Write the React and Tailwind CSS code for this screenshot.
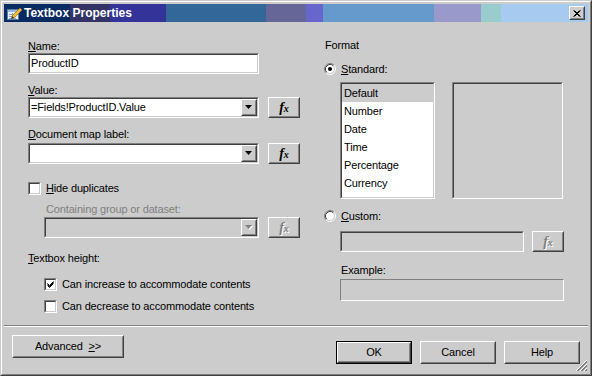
import React from 'react';

const font = "font-['Liberation_Sans',Arial,sans-serif]";

// 2px sunken edge, classic style
const Sunken = ({ className = '', inner = 'bg-white', children }) => (
  <div className={`border border-t-[#808080] border-l-[#808080] border-b-white border-r-white ${className}`}>
    <div className={`h-full border border-t-[#404040] border-l-[#404040] border-b-[#cccccc] border-r-[#cccccc] ${inner}`}>
      {children}
    </div>
  </div>
);

// thin 1px sunken edge
const Thin = ({ className = '' }) => (
  <div className={`border border-t-[#808080] border-l-[#808080] border-b-white border-r-white bg-[#cccccc] ${className}`} />
);

const Raised = ({ className = '', children, def = false }) => {
  const btn = (
    <div className={`h-full border border-t-white border-l-white border-b-[#404040] border-r-[#404040] bg-[#cccccc]`}>
      <div className="h-full border border-t-[#cccccc] border-l-[#cccccc] border-b-[#808080] border-r-[#808080] flex items-center justify-center">
        {children}
      </div>
    </div>
  );
  if (def) return <div className={`border border-black ${className}`}>{btn}</div>;
  return <div className={className}>{btn}</div>;
};

const Arrow = ({ disabled }) => (
  <svg width="8" height="5" viewBox="0 0 8 5">
    {disabled && <path d="M1 1h7l-3.5 4z" fill="#fff" />}
    <path d="M0 0h7l-3.5 4z" fill={disabled ? '#808080' : '#000'} />
  </svg>
);

const Fx = ({ disabled }) => (
  <span
    className={`font-['Liberation_Serif',serif] italic font-bold leading-none ${disabled ? 'text-[#808080] [text-shadow:1px_1px_0_#fff]' : 'text-black'}`}
  >
    <span className="text-[14px]">f</span>
    <span className="text-[10px]">x</span>
  </span>
);

const FxButton = ({ disabled }) => (
  <Raised className="w-[32px] h-[21px]">
    <Fx disabled={disabled} />
  </Raised>
);

const Combo = ({ value = '', className = '', disabled }) => (
  <Sunken className={`h-[21px] ${className}`} inner={disabled ? 'bg-[#cccccc]' : 'bg-white'}>
    <div className="flex h-full">
      <div className="flex-1 pl-[1px] leading-[17px] whitespace-nowrap overflow-hidden">{value}</div>
      <Raised className="w-[16px] h-full">
        <Arrow disabled={disabled} />
      </Raised>
    </div>
  </Sunken>
);

const Check = ({ checked }) => (
  <Sunken className="w-[13px] h-[13px] shrink-0">
    {checked && (
      <svg width="9" height="9" viewBox="0 0 9 9" className="block">
        <path d="M1.5 3.5l2 2 4-4M1.5 4.5l2 2 4-4M1.5 5.5l2 2 4-4" stroke="#000" fill="none" strokeWidth="1" />
      </svg>
    )}
  </Sunken>
);

const Radio = ({ checked }) => (
  <svg width="12" height="12" viewBox="0 0 12 12" className="shrink-0">
    <circle cx="6" cy="6" r="4.5" fill="#fff" />
    <path d="M2.11 9.89A5.5 5.5 0 0 1 9.89 2.11" stroke="#808080" fill="none" />
    <path d="M2.82 9.18A4.5 4.5 0 0 1 9.18 2.82" stroke="#404040" fill="none" />
    <path d="M9.89 2.11A5.5 5.5 0 0 1 2.11 9.89" stroke="#fff" fill="none" />
    <path d="M9.18 2.82A4.5 4.5 0 0 1 2.82 9.18" stroke="#cccccc" fill="none" />
    {checked && <circle cx="6" cy="6" r="2" fill="#000" />}
  </svg>
);

const Label = ({ children, className = '', disabled }) => (
  <div className={`h-[13px] leading-[13px] whitespace-nowrap ${disabled ? 'text-[#808080]' : ''} ${className}`}>
    {children}
  </div>
);

const U = ({ children }) => <span className="underline underline-offset-[1px]">{children}</span>;

const TitleIcon = () => (
  <svg width="16" height="16" viewBox="0 0 16 16">
    <rect x="1.5" y="4.5" width="11" height="10" fill="#e8eef6" stroke="#5a7ca8" />
    <rect x="2" y="5" width="10" height="2" fill="#9db8d8" />
    <path d="M3 9.5h7M3 11.5h7M3 13.5h7M6.5 8v6" stroke="#8aa4c4" />
    <path d="M6 11l8-8 2 2-8 8z" fill="#f0c040" stroke="#a07010" strokeWidth="0.7" />
    <path d="M6 11l-1 3 3-1z" fill="#503010" />
  </svg>
);

const titleBg =
  'bg-[linear-gradient(to_right,#0a2a62_0px,#0a2a62_66px,#333366_66px,#333366_106px,#333399_106px,#333399_162px,#336699_162px,#336699_262px,#666699_262px,#666699_302px,#6666cc_302px,#6666cc_319px,#6699cc_319px,#6699cc_430px,#9999cc_430px,#9999cc_477px,#99cccc_477px,#99cccc_497px,#a6caf0_497px,#a6caf0_100%)]';

const formats = ['Default', 'Number', 'Date', 'Time', 'Percentage', 'Currency'];

export default function App() {
  return (
    <div className={`${font} text-[11px] tracking-[-0.15px] text-black w-[592px] h-[376px] border border-t-[#cccccc] border-l-[#cccccc] border-b-[#404040] border-r-[#404040]`}>
      <div className="h-full border border-t-white border-l-white border-b-[#808080] border-r-[#808080] bg-[#cccccc] p-[2px] flex flex-col">
        {/* title bar */}
        <div className={`h-[18px] shrink-0 flex items-center ${titleBg}`}>
          <div className="ml-[2px] w-[16px] h-[16px]">
            <TitleIcon />
          </div>
          <span className="ml-[2px] text-white font-bold text-[12px] leading-none tracking-[0px]">Textbox Properties</span>
          <div className="ml-auto mr-[3px]">
            <Raised className="w-[16px] h-[14px]">
              <svg width="8" height="7" viewBox="0 0 8 7">
                <path d="M0.5 0.5l6 6M1.5 0.5l6 6M6.5 0.5l-6 6M7.5 0.5l-6 6" stroke="#000" />
              </svg>
            </Raised>
          </div>
        </div>

        {/* body */}
        <div className="relative flex-1 flex flex-col">
          <div className="h-[303px] flex">
            {/* left column */}
            <div className="w-[296px] pl-[24px] flex flex-col">
              <Label className="mt-[18px]"><U>N</U>ame:</Label>
              <Sunken className="w-[231px] h-[21px]">
                <div className="pl-[1px] leading-[17px]">ProductID</div>
              </Sunken>

              <Label className="mt-[10px]"><U>V</U>alue:</Label>
              <div className="flex h-[21px]">
                <Combo className="w-[231px]" value="=Fields!ProductID.Value" />
                <div className="ml-[9px]"><FxButton /></div>
              </div>

              <Label className="mt-[10px]"><U>D</U>ocument map label:</Label>
              <div className="flex h-[21px] mt-[2px]">
                <Combo className="w-[231px]" />
                <div className="ml-[9px]"><FxButton /></div>
              </div>

              <div className="mt-[18px] h-[13px] flex items-center">
                <Check />
                <span className="ml-[5px] leading-[13px]"><U>H</U>ide duplicates</span>
              </div>

              <Label className="mt-[8px] ml-[18px]" disabled>Containing group or dataset:</Label>
              <div className="flex h-[21px] mt-[1px] ml-[16px]">
                <Combo className="w-[215px]" disabled />
                <div className="ml-[9px]"><FxButton disabled /></div>
              </div>

              <Label className="mt-[14px]"><U>T</U>extbox height:</Label>
              <div className="mt-[13px] ml-[16px] h-[13px] flex items-center">
                <Check checked />
                <span className="ml-[5px] leading-[13px]">Can increase to accommodate contents</span>
              </div>
              <div className="mt-[9px] ml-[16px] h-[13px] flex items-center">
                <Check />
                <span className="ml-[5px] leading-[13px]">Can decrease to accommodate contents</span>
              </div>
            </div>

            {/* right column */}
            <div className="ml-[24px] flex flex-col">
              <Label className="mt-[17px] ml-[1px]">Format</Label>
              <div className="mt-[10px] h-[14px] flex items-center">
                <Radio checked />
                <span className="ml-[5px] leading-[14px]"><U>S</U>tandard:</span>
              </div>
              <div className="mt-[6px] ml-[16px] flex">
                <Sunken className="w-[95px] h-[117px]">
                  <div className="flex flex-col">
                    {formats.map((f, i) => (
                      <div key={f} className={`h-[18px] leading-[18px] pl-[2px] ${i === 0 ? 'bg-[#cccccc]' : ''}`}>
                        {f}
                      </div>
                    ))}
                  </div>
                </Sunken>
                <Sunken className="ml-[17px] w-[111px] h-[117px]" inner="bg-[#cccccc]" />
              </div>

              <div className="mt-[10px] h-[14px] flex items-center">
                <Radio />
                <span className="ml-[5px] leading-[14px]"><U>C</U>ustom:</span>
              </div>
              <div className="mt-[8px] ml-[16px] flex h-[21px]">
                <Sunken className="w-[184px] h-[21px]" inner="bg-[#cccccc]" />
                <div className="ml-[8px]"><FxButton disabled /></div>
              </div>

              <Label className="mt-[12px] ml-[17px]">Example:</Label>
              <Thin className="mt-[2px] ml-[16px] w-[224px] h-[22px]" />
            </div>
          </div>

          {/* separator */}
          <div className="h-[2px] border-t border-t-[#808080] border-b border-b-white" />

          {/* bottom buttons */}
          <div className="flex items-start justify-between px-[8px]">
            <Raised className="mt-[8px] w-[112px] h-[23px]">
              <span>Advanced&nbsp;&nbsp;<U>&gt;</U>&gt;</span>
            </Raised>
            <div className="mt-[14px] flex gap-[8px]">
              <Raised def className="w-[76px] h-[23px]">OK</Raised>
              <Raised className="w-[76px] h-[23px]">Cancel</Raised>
              <Raised className="w-[76px] h-[23px]">Help</Raised>
            </div>
          </div>

          {/* size grip */}
          <svg width="13" height="13" viewBox="0 0 13 13" className="absolute right-0 bottom-0">
            <path d="M12 1L1 12M12 5L5 12M12 9L9 12" stroke="#fff" />
            <path d="M12 2L2 12M12 3L3 12M12 6L6 12M12 7L7 12M12 10L10 12M12 11L11 12" stroke="#808080" />
          </svg>
        </div>
      </div>
    </div>
  );
}
